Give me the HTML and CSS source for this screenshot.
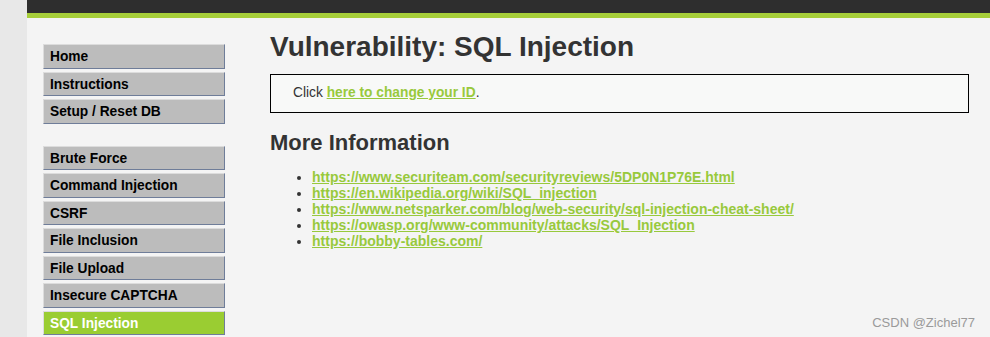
FILE: index.html
```html
<!DOCTYPE html>
<html>
<head>
<meta charset="utf-8">
<title>Vulnerability: SQL Injection</title>
<link rel="stylesheet" href="styles.css">
</head>
<body>
<div class="page">
  <div class="strip"></div>
  <div class="main">
    <div class="header"></div>
    <div class="bar"></div>
    <div class="body">
      <nav class="menu">
        <ul class="block">
          <li><a href="#">Home</a></li>
          <li><a href="#">Instructions</a></li>
          <li><a href="#">Setup / Reset DB</a></li>
        </ul>
        <ul class="block">
          <li><a href="#">Brute Force</a></li>
          <li><a href="#">Command Injection</a></li>
          <li><a href="#">CSRF</a></li>
          <li><a href="#">File Inclusion</a></li>
          <li><a href="#">File Upload</a></li>
          <li><a href="#">Insecure CAPTCHA</a></li>
          <li class="selected"><a href="#">SQL Injection</a></li>
        </ul>
      </nav>
      <div class="content">
        <h1 class="title">Vulnerability: SQL Injection</h1>
        <div class="vbox">Click <a href="#">here to change your ID</a>.</div>
        <h2 class="subtitle">More Information</h2>
        <ul class="links">
          <li><a href="#">https://www.securiteam.com/securityreviews/5DP0N1P76E.html</a></li>
          <li><a href="#">https://en.wikipedia.org/wiki/SQL_injection</a></li>
          <li><a href="#">https://www.netsparker.com/blog/web-security/sql-injection-cheat-sheet/</a></li>
          <li><a href="#">https://owasp.org/www-community/attacks/SQL_Injection</a></li>
          <li><a href="#">https://bobby-tables.com/</a></li>
        </ul>
      </div>
    </div>
  </div>
</div>
<div class="watermark">CSDN @Zichel77</div>
</body>
</html>
```
FILE: styles.css
```css
html, body {
  margin: 0;
  padding: 0;
  height: 100%;
  overflow: hidden;
}
body {
  font-family: "Liberation Sans", Arial, sans-serif;
  font-size: 13.75px;
  color: #333;
  background: #f4f4f4;
}
.page {
  display: flex;
  height: 337px;
  overflow: hidden;
}
.strip {
  width: 27px;
  background: #e8e8e8;
  flex: none;
}
.main {
  flex: 1;
  display: flex;
  flex-direction: column;
  background: #f4f4f4;
}
.header {
  height: 13px;
  background: #2e2e2e;
}
.bar {
  height: 5px;
  background: #a6ce39;
}
.body {
  display: flex;
}
.menu {
  width: 182px;
  margin-left: 16px;
  padding-top: 26px;
  flex: none;
}
.block {
  list-style: none;
  margin: 0 0 22px 0;
  padding: 0;
}
.block:last-child {
  margin-bottom: 0;
}
.block li {
  margin-bottom: 3px;
}
.block li:last-child {
  margin-bottom: 0;
}
.block li a {
  display: block;
  height: 22.5px;
  line-height: 23px;
  padding-left: 6px;
  background: #bcbcbc;
  border-top: 1px solid #dcdcdc;
  border-left: 1px solid #dcdcdc;
  border-bottom: 1px solid #6f7d99;
  border-right: 1px solid #6f7d99;
  color: #000;
  font-weight: bold;
  font-size: 13.75px;
  text-decoration: none;
}
.block li.selected a {
  background: #9acd32;
  color: #fff;
}
.content {
  flex: 1;
  margin-left: 45px;
  margin-right: 21px;
}
.title {
  margin: 11.8px 0 0 0;
  font-size: 28px;
  line-height: 34px;
  font-weight: bold;
  color: #333;
}
.vbox {
  margin-top: 10.2px;
  border: 1px solid #000;
  background: #f8f9f8;
  padding: 9.8px 22px 10.9px 22px;
  line-height: 16px;
  font-size: 13.75px;
  color: #333;
}
.vbox a, .links a {
  color: #98c93c;
  font-weight: bold;
  text-decoration: underline;
}
.subtitle {
  margin: 17px 0 0 0;
  font-size: 22px;
  line-height: 25px;
  font-weight: bold;
  color: #333;
}
.links {
  margin: 14.2px 0 0 0;
  padding-left: 42px;
  line-height: 16px;
  font-size: 14px;
}
.watermark {
  position: absolute;
  right: 15px;
  bottom: 7px;
  font-size: 13px;
  color: #9a9a9a;
  font-family: "Liberation Sans", Arial, sans-serif;
}
```
